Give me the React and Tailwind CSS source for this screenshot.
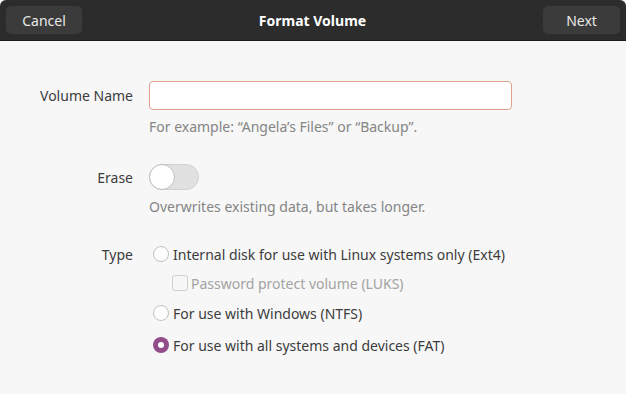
import React from "react";

function Radio({ checked }) {
  if (checked) {
    return (
      <span className="flex h-4 w-4 shrink-0 items-center justify-center rounded-full bg-[#924d8b]">
        <span className="h-[6px] w-[6px] rounded-full bg-white" />
      </span>
    );
  }
  return <span className="block h-4 w-4 shrink-0 rounded-full border border-[#c2c2c2] bg-[#fdfdfd]" />;
}

export default function App() {
  return (
    <div
      className="flex h-[394px] w-[626px] flex-col overflow-hidden bg-[#f7f7f7] text-[14px] text-[#3c3c3c]"
      style={{ fontFamily: '"Noto Sans", "Open Sans", sans-serif' }}
    >
      <div className="flex h-[41px] shrink-0 items-center justify-between rounded-t-[6px] border-b border-[#1a1a1a] bg-[#2c2c2c] px-[6px]">
        <button className="flex h-[28px] w-[76px] items-center justify-center rounded-[5px] bg-[#3b3b3b] text-[14px] text-[#e8e8e8]">
          Cancel
        </button>
        <div className="text-[14px] font-bold text-white">Format Volume</div>
        <button className="flex h-[28px] w-[77px] items-center justify-center rounded-[5px] bg-[#3b3b3b] text-[14px] text-[#e8e8e8]">
          Next
        </button>
      </div>

      <div className="grid grid-cols-[133px_1fr] gap-x-4 pt-[40px]">
        <div className="flex h-[29px] items-center justify-end">Volume Name</div>
        <div>
          <div className="h-[29px] w-[363px] rounded-[4px] border border-[#e0a08c] bg-white" />
          <div className="mt-[7px] leading-[20px] text-[#858585]">
            For example: “Angela’s Files” or “Backup”.
          </div>
        </div>

        <div className="mt-[27px] flex h-[26px] items-center justify-end">Erase</div>
        <div className="mt-[27px]">
          <div className="relative h-[26px] w-[50px] rounded-full border border-[#d0d0d0] bg-[#e1e1e1]">
            <span className="absolute left-[-1px] top-[-1px] h-[26px] w-[26px] rounded-full border border-[#bdbdbd] bg-white" />
          </div>
          <div className="mt-[7px] leading-[20px] text-[#858585]">
            Overwrites existing data, but takes longer.
          </div>
        </div>

        <div className="mt-[27px] flex h-[20px] items-center justify-end">Type</div>
        <div className="mt-[27px] flex flex-col">
          <div className="flex h-[20px] items-center gap-[4px] pl-[4px]">
            <Radio />
            <span>Internal disk for use with Linux systems only (Ext4)</span>
          </div>
          <div className="mt-[9px] flex h-[20px] items-center gap-[3px] pl-[23px] text-[#a3a3a3]">
            <span className="block h-4 w-4 shrink-0 rounded-[3px] border border-[#cfcfcf] bg-[#f7f7f7]" />
            <span>Password protect volume (LUKS)</span>
          </div>
          <div className="mt-[10px] flex h-[20px] items-center gap-[4px] pl-[4px]">
            <Radio />
            <span>For use with Windows (NTFS)</span>
          </div>
          <div className="mt-[12px] flex h-[20px] items-center gap-[4px] pl-[4px]">
            <Radio checked />
            <span>For use with all systems and devices (FAT)</span>
          </div>
        </div>
      </div>
    </div>
  );
}
